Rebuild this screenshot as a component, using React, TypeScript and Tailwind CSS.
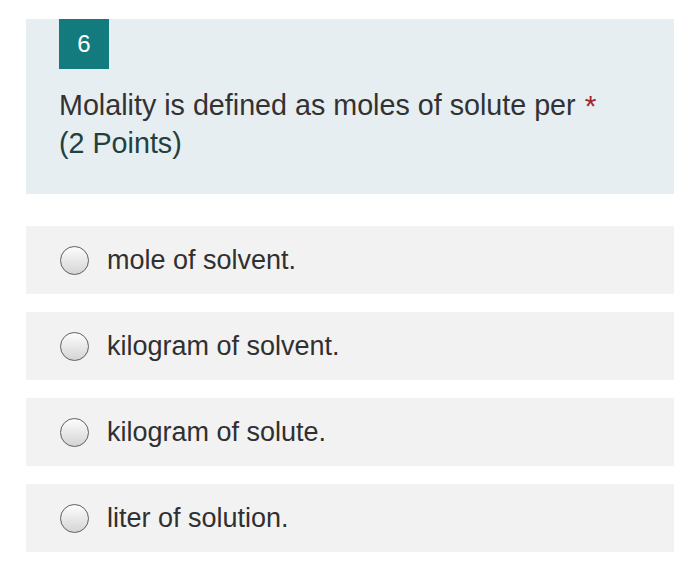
const options = ['mole of solvent.', 'kilogram of solvent.', 'kilogram of solute.', 'liter of solution.'];

function Radio() {
  return (
    <span className="h-[29px] w-[29px] shrink-0 rounded-full border-[1.5px] border-[#5f5f5f] bg-gradient-to-b from-[#fdfdfd] to-[#d4d4d4]" />
  );
}

export default function App() {
  return (
    <div className="min-h-[584px] bg-white px-[26px] pt-[19px] font-['Liberation_Sans',Arial,sans-serif]">
      <div className="bg-[#e6eef2] pb-[32px] pl-[33px] pr-6">
        <div className="flex h-[50px] w-[50px] items-center justify-center bg-[#137b7e] text-[24px] text-white">
          6
        </div>
        <div className="mt-[17px] text-[28.7px] leading-[38px] text-[#323232]">
          <div>
            Molality is defined as moles of solute per{' '}
            <span className="relative top-[1px] ml-[1px] text-[30px] text-[#a4262c]">*</span>
          </div>
          <div className="text-[#22403d]">(2 Points)</div>
        </div>
      </div>

      <div className="mt-[32px] flex flex-col gap-[18px]">
        {options.map((o) => (
          <div key={o} className="flex h-[68px] items-center gap-[18px] bg-[#f2f2f2] pl-[34px]">
            <Radio />
            <span className="text-[27px] text-[#303030]">{o}</span>
          </div>
        ))}
      </div>
    </div>
  );
}
